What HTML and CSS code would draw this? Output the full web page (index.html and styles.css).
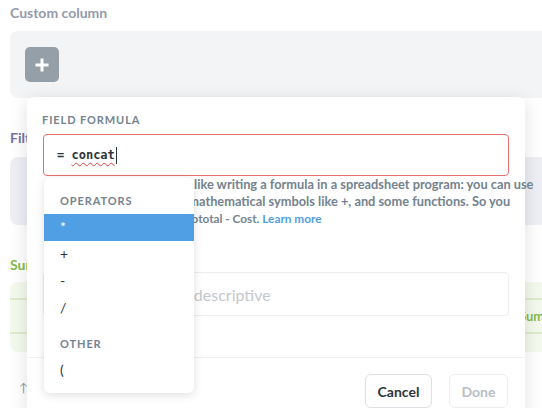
FILE: index.html
```html
<!DOCTYPE html>
<html>
<head>
<meta charset="utf-8">
<link rel="stylesheet" href="styles.css">
</head>
<body>
<div class="page">
  <div class="step-title custom">Custom column</div>
  <div class="step-box gray">
    <div class="add-btn"><svg width="16" height="16" viewBox="0 0 16 16"><path d="M8 1.5v13M1.5 8h13" stroke="#fff" stroke-width="3" stroke-linecap="butt"/></svg></div>
  </div>
  <div class="step-title filter">Filter</div>
  <div class="step-box purple"></div>
  <div class="step-title summarize">Summarize</div>
  <div class="step-box green">
    <div class="sum-row"><span class="sum-text">Summarize by</span></div>
  </div>
  <div class="sort-row">↑↓ Sort</div>
</div>

<div class="popover">
  <div class="field-label">FIELD FORMULA</div>
  <div class="formula-input">
    <span class="code">= <span class="fn">concat</span></span><span class="caret"></span>
  </div>
  <p class="help"><span class="pre p1">Think of this as being kind of </span>like writing a formula in a spreadsheet program: you can use<br><span class="pre p2">numbers, fields in this table, </span>mathematical symbols like +, and some functions. So you<br><span class="pre p3">could type something like </span><span class="l3">Subtotal - Cost. <span class="link">Learn more</span></span></p>
  <div class="field-label name-label">GIVE IT A NAME</div>
  <div class="name-input">Something nice and descriptive</div>
  <div class="footer">
    <button class="btn cancel">Cancel</button>
    <button class="btn done">Done</button>
  </div>

  <div class="suggestions">
    <div class="sg-header">OPERATORS</div>
    <div class="sg-item selected">*</div>
    <div class="sg-item">+</div>
    <div class="sg-item">-</div>
    <div class="sg-item">/</div>
    <div class="sg-header other">OTHER</div>
    <div class="sg-item">(</div>
  </div>
</div>
</body>
</html>
```

FILE: styles.css
```css
* { box-sizing: border-box; }
html, body { margin: 0; padding: 0; background: #fff; }
body {
  width: 542px;
  height: 408px;
  overflow: hidden;
  position: relative;
  font-family: Lato, "Noto Sans", sans-serif;
}
.page {
  padding: 3px 0 0 10px;
  display: flex;
  flex-direction: column;
}
.step-title {
  font-size: 14px;
  font-weight: 700;
  line-height: 20px;
  height: 20px;
}
.step-title.custom { color: #949aab; margin-bottom: 8px; }
.step-title.filter { color: #7172ad; margin-top: 30px; margin-bottom: 9px; }
.step-title.summarize { color: #84bb4c; margin-top: 30px; margin-bottom: 7px; }
.step-box {
  border-radius: 8px 0 0 8px;
  height: 68px;
  margin-right: -10px;
}
.step-box.gray { background: #f3f4f6; padding: 16px 15px; height: 67px; }
.step-box.purple { background: #eeeff5; }
.step-box.green { background: #f4f9ee; padding-top: 16px; height: 70px; }
.add-btn {
  width: 34px;
  height: 35px;
  background: #949fa8;
  border-radius: 5px;
  display: flex;
  align-items: center;
  justify-content: center;
}
.sum-row {
  height: 36px;
  border-top: 2px solid #dcebc9;
  border-bottom: 2px solid #dcebc9;
  display: flex;
  align-items: center;
}
.sum-text {
  margin-left: 509px;
  color: #84bb4c;
  font-weight: 700;
  font-size: 13px;
  white-space: nowrap;
}
.sort-row {
  margin-top: 28px;
  margin-left: 9px;
  font-size: 12px;
  color: #949aab;
}

.popover {
  position: absolute;
  left: 27px;
  top: 97px;
  width: 498px;
  height: 340px;
  background: #fff;
  border-radius: 6px;
  box-shadow: 0 4px 18px rgba(0, 0, 0, 0.13);
  padding-top: 16px;
}
.field-label {
  margin: 0 16px 7px 15px;
  font-size: 11px;
  line-height: 14px;
  font-weight: 700;
  letter-spacing: 0.9px;
  color: #74838f;
}
.formula-input {
  margin: 0 16px;
  height: 42px;
  border: 1px solid #ed6e6e;
  border-radius: 4px;
  padding: 0 13px;
  display: flex;
  align-items: center;
  font-family: "DejaVu Sans Mono", "Liberation Mono", monospace;
  font-weight: 700;
  font-size: 12px;
  color: #2e353b;
  white-space: pre;
}
.fn {
  text-decoration: underline wavy #e0443e;
  text-decoration-thickness: 1px;
  text-underline-offset: 3px;
}
.caret {
  display: inline-block;
  width: 1px;
  height: 17px;
  background: #2e353b;
  margin-left: 1px;
}
.help {
  margin: 0 16px 0 18px;
  font-size: 12.8px;
  line-height: 16px;
  font-weight: 700;
  color: #74838f;
  white-space: nowrap;
}
.help .p1 { font-size: 11.5px; }
.help .p2 { font-size: 11.35px; }
.help .p3 { font-size: 11.5px; }
.help .l3 { font-size: 11.8px; }
.link { color: #509ee3; }
.name-label { margin-top: 16px; margin-bottom: 15px; margin-left: 19px; }
.name-input {
  margin: 0 16px;
  height: 44px;
  border: 1px solid #eceef0;
  border-radius: 4px;
  padding: 0 8px;
  display: flex;
  align-items: center;
  font-size: 16px;
  color: #c3c8ce;
}
.footer {
  margin-top: 41px;
  border-top: 1px solid #eef0f1;
  padding: 16px 17px 0 0;
  display: flex;
  justify-content: flex-end;
  gap: 17px;
}
.btn {
  height: 34px;
  border-radius: 6px;
  background: #fff;
  font-family: Lato, "Noto Sans", sans-serif;
  font-weight: 700;
  font-size: 14px;
  padding: 0;
}
.cancel { width: 67px; border: 1px solid #dcdfe3; color: #2e353b; }
.done { width: 59px; border: 1px solid #eceef0; color: #b8bec5; }

.suggestions {
  position: absolute;
  left: 17px;
  top: 81px;
  width: 150px;
  height: 215px;
  background: #fff;
  border-radius: 6px;
  box-shadow: 0 2px 10px rgba(0, 0, 0, 0.13);
  padding: 8px 0 9px;
}
.sg-header {
  height: 28px;
  padding-left: 16px;
  display: flex;
  align-items: center;
  font-size: 11px;
  font-weight: 700;
  letter-spacing: 0.9px;
  color: #74838f;
}
.sg-header.other { height: 22px; margin-top: 10px; margin-bottom: 3px; }
.sg-item {
  height: 27px;
  padding: 0 16px 3px;
  display: flex;
  align-items: center;
  font-size: 14px;
  color: #2e353b;
}
.sg-item.selected { background: #509ee3; color: #fff; }
```
